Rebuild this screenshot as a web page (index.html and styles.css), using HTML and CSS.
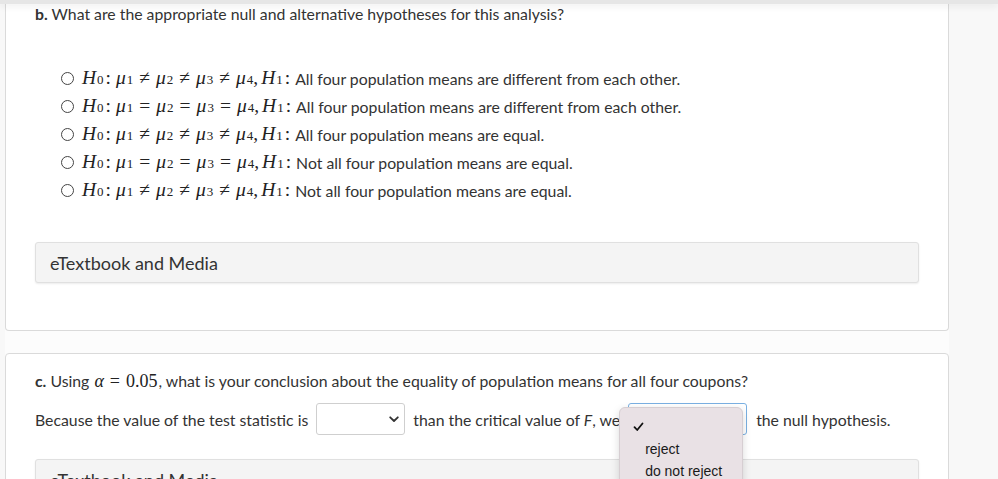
FILE: index.html
```html
<!DOCTYPE html>
<html>
<head>
<meta charset="utf-8">
<link rel="stylesheet" href="styles.css">
</head>
<body>
<div class="topbar"></div>
<div class="wrap">
  <section class="card card-b">
    <p class="q"><b>b.</b> What are the appropriate null and alternative hypotheses for this analysis?</p>
    <ul class="opts">
      <li><span class="radio"></span><span class="m"><i>H</i><sub>0</sub><span class="col">:</span><i>μ</i><sub>1</sub><span class="rel">≠</span><i>μ</i><sub>2</sub><span class="rel">≠</span><i>μ</i><sub>3</sub><span class="rel">≠</span><i>μ</i><sub>4</sub><span class="cm">,</span><i>H</i><sub>1</sub><span class="col">:</span></span><span class="t">All four population means are different from each other.</span></li>
      <li><span class="radio"></span><span class="m"><i>H</i><sub>0</sub><span class="col">:</span><i>μ</i><sub>1</sub><span class="rel">=</span><i>μ</i><sub>2</sub><span class="rel">=</span><i>μ</i><sub>3</sub><span class="rel">=</span><i>μ</i><sub>4</sub><span class="cm">,</span><i>H</i><sub>1</sub><span class="col">:</span></span><span class="t">All four population means are different from each other.</span></li>
      <li><span class="radio"></span><span class="m"><i>H</i><sub>0</sub><span class="col">:</span><i>μ</i><sub>1</sub><span class="rel">≠</span><i>μ</i><sub>2</sub><span class="rel">≠</span><i>μ</i><sub>3</sub><span class="rel">≠</span><i>μ</i><sub>4</sub><span class="cm">,</span><i>H</i><sub>1</sub><span class="col">:</span></span><span class="t">All four population means are equal.</span></li>
      <li><span class="radio"></span><span class="m"><i>H</i><sub>0</sub><span class="col">:</span><i>μ</i><sub>1</sub><span class="rel">=</span><i>μ</i><sub>2</sub><span class="rel">=</span><i>μ</i><sub>3</sub><span class="rel">=</span><i>μ</i><sub>4</sub><span class="cm">,</span><i>H</i><sub>1</sub><span class="col">:</span></span><span class="t">Not all four population means are equal.</span></li>
      <li><span class="radio"></span><span class="m"><i>H</i><sub>0</sub><span class="col">:</span><i>μ</i><sub>1</sub><span class="rel">≠</span><i>μ</i><sub>2</sub><span class="rel">≠</span><i>μ</i><sub>3</sub><span class="rel">≠</span><i>μ</i><sub>4</sub><span class="cm">,</span><i>H</i><sub>1</sub><span class="col">:</span></span><span class="t">Not all four population means are equal.</span></li>
    </ul>
    <div class="media">eTextbook and Media</div>
  </section>

  <section class="card card-c">
    <p class="q"><b>c.</b> Using <span class="m inl"><i>α</i><span class="rel">=</span>0.05</span>, what is your conclusion about the equality of population means for all four coupons?</p>
    <div class="fill">
      <span>Because the value of the test statistic is</span>
      <span class="sel sel1"><svg class="chev" width="10" height="7" viewBox="0 0 10 7"><path d="M1.2 1.3 L5 5 L8.8 1.3" fill="none" stroke="#333" stroke-width="1.8" stroke-linecap="round" stroke-linejoin="round"/></svg></span>
      <span>than the critical value of <i>F</i>, we</span>
      <span class="sel sel2">
        <span class="popup">
          <span class="item"><svg class="check" width="11" height="10" viewBox="0 0 11 10"><path d="M1.5 5.2 L4.2 8 L9.5 1.5" fill="none" stroke="#111" stroke-width="1.8" stroke-linecap="round" stroke-linejoin="round"/></svg></span>
          <span class="item">reject</span>
          <span class="item">do not reject</span>
        </span>
      </span>
      <span>the null hypothesis.</span>
    </div>
    <div class="media">eTextbook and Media</div>
  </section>
</div>
</body>
</html>
```

FILE: styles.css
```css
html, body {
  margin: 0;
  padding: 0;
  overflow: hidden;
}
body {
  background: #f8f8f8;
  font-family: Lato, "Open Sans", sans-serif;
  color: #333;
  height: 479px;
}
.topbar {
  position: absolute;
  left: 0;
  top: 0;
  width: 100%;
  height: 4px;
  background: #e6e6e6;
  box-shadow: 0 2px 7px rgba(0, 0, 0, 0.09);
  z-index: 5;
}
.wrap {
  margin-left: 5px;
  width: 944px;
  background: #fcfcfc;
  display: flex;
  flex-direction: column;
  gap: 22px;
}
.card {
  background: #fff;
  border: 1px solid #dadada;
  border-radius: 4px;
  padding: 0 29px;
}
.card-b {
  border-top: none;
  border-radius: 0 0 4px 4px;
  padding-top: 4px;
  padding-bottom: 47px;
}
.q {
  margin: 0;
  font-size: 15.8px;
  line-height: 20px;
  white-space: nowrap;
}
.q b {
  font-weight: 700;
}
.opts {
  list-style: none;
  margin: 40px 0 0 0;
  padding: 0 0 0 26px;
}
.opts li {
  display: flex;
  align-items: center;
  height: 28px;
  white-space: nowrap;
}
.radio {
  width: 11px;
  height: 11px;
  border: 1px solid #444;
  border-radius: 50%;
  margin-right: 8px;
  flex: none;
}
.m {
  font-family: "Liberation Serif", "DejaVu Serif", serif;
  font-size: 19.5px;
  display: inline-flex;
  align-items: baseline;
  color: #222;
}
.m i {
  font-style: italic;
}
.m sub {
  font-size: 13px;
  vertical-align: -4px;
  line-height: 0;
  margin-left: 1px;
}
.m .rel {
  margin: 0 6px;
}
.m .col {
  margin: 0 5px 0 2px;
}
.m .cm {
  margin-right: 3px;
}
.t {
  font-size: 15.8px;
}
.media {
  margin-top: 38px;
  height: 39px;
  background: #f4f4f4;
  border: 1px solid #e0e0e0;
  border-radius: 3px;
  box-shadow: 0 1px 2px rgba(0, 0, 0, 0.08);
  display: flex;
  align-items: center;
  padding-left: 14px;
  font-size: 18px;
  color: #333;
}
.card-c {
  padding-top: 17px;
  padding-bottom: 40px;
}
.card-c .q .inl {
  margin: 0 1px;
  font-size: 18px;
}
.fill {
  margin-top: 12px;
  display: flex;
  align-items: center;
  font-size: 15.8px;
  white-space: nowrap;
}
.sel {
  position: relative;
  height: 30px;
  border: 1px solid #cfcfcf;
  border-radius: 3px;
  background: #fff;
  margin: 0 8px;
  flex: none;
}
.sel1 {
  width: 87px;
}
.sel2 {
  width: 117px;
  border-color: #7ab0e2;
  margin-right: 9px;
}
.chev {
  position: absolute;
  right: 5px;
  top: 12px;
}
.card-c .media {
  margin-top: 24px;
}
.popup {
  position: absolute;
  left: -10px;
  top: 3px;
  width: 124px;
  height: 80px;
  background: #e9e1e5;
  border: 1px solid #d6ced2;
  border-radius: 6px;
  box-shadow: 0 3px 8px rgba(0, 0, 0, 0.15);
  padding-top: 8px;
  box-sizing: border-box;
  display: flex;
  flex-direction: column;
  z-index: 10;
  font-family: "Liberation Sans", Arial, sans-serif;
  font-size: 14px;
  color: #1a1a1a;
}
.item {
  height: 22px;
  flex: none;
  display: flex;
  align-items: center;
  padding-left: 25px;
}
.item:first-child {
  padding-left: 13px;
}
```
